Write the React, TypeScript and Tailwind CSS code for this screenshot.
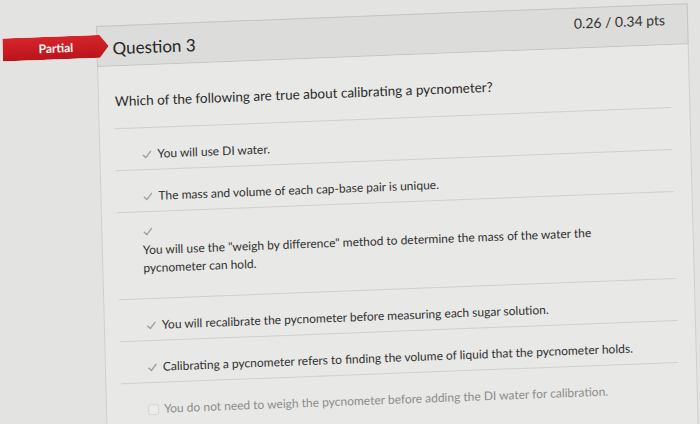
import React from "react"

// Canvas-style quiz result card, tilted to match the photographed screen.

const answers = [
  { text: "You will use DI water.", checked: true },
  { text: "The mass and volume of each cap-base pair is unique.", checked: true },
  {
    text: 'You will use the "weigh by difference" method to determine the mass of the water the pycnometer can hold.',
    checked: true,
    stacked: true,
  },
  { text: "You will recalibrate the pycnometer before measuring each sugar solution.", checked: true },
  { text: "Calibrating a pycnometer refers to finding the volume of liquid that the pycnometer holds.", checked: true },
  { text: "You do not need to weigh the pycnometer before adding the DI water for calibration.", checked: false },
]

function Check({ on }: { on: boolean }) {
  if (!on) {
    return <span className="inline-block w-[11px] h-[11px] rounded-[3px] border border-[#d6d6d4] bg-[#ececea] shrink-0" />
  }
  return (
    <svg width="11" height="11" viewBox="0 0 12 12" className="shrink-0">
      <path d="M2 6.5 L4.8 9.2 L10 2.6" fill="none" stroke="#a3a3a1" strokeWidth="1.6" strokeLinecap="round" strokeLinejoin="round" />
    </svg>
  )
}

export default function App() {
  return (
    <div className="w-[700px] h-[424px] overflow-hidden bg-[#e3e3e1] font-['Lato','Liberation_Sans',sans-serif] text-[#2f2f2f]">
      <div className="relative ml-[96px] mt-[26px] w-[592px] origin-top-left rotate-[-1.5deg] skew-y-[-0.7deg]">
        <div className="absolute left-[-94px] top-[9px] w-[106px] h-[23px] bg-gradient-to-b from-[#d8242b] to-[#b9141b] shadow-[0_1px_2px_rgba(0,0,0,0.35)] [clip-path:polygon(0_0,calc(100%-9px)_0,100%_50%,calc(100%-9px)_100%,0_100%)] flex items-center pl-[36px]">
          <span className="text-white text-[12px] font-bold">Partial</span>
        </div>

        <div className="h-[41px] bg-[#dcdcda] border border-[#c4c4c2] flex items-center justify-between pl-[15px] pr-[22px]">
          <span className="text-[17px] text-[#262626] mt-[4px]">Question 3</span>
          <span className="text-[14px] text-[#333] mb-[10px]">0.26 / 0.34 pts</span>
        </div>

        <div className="h-[460px] bg-[#e8e8e6] border-x border-[#cfcfcd] pl-[15px] pr-[18px]">
          <p className="pt-[26px] pb-[18px] text-[13.5px] leading-[18px] pl-[1px] text-[#2a2a2a]">
            Which of the following are true about calibrating a pycnometer?
          </p>

          {answers.map((a) =>
            a.stacked ? (
              <div key={a.text} className="border-t border-[#cfcfcd] pl-[25px] pt-[14px] pb-[21px]">
                <Check on={a.checked} />
                <p className="mt-[4px] max-w-[460px] text-[12px] leading-[18px] text-[#303030]">{a.text}</p>
              </div>
            ) : (
              <div
                key={a.text}
                className="border-t border-[#cfcfcd] pl-[26px] pt-[17px] pb-[6px] flex items-center gap-[5px] h-[42px]"
              >
                <Check on={a.checked} />
                <span className={`text-[12px] leading-[18px] ${a.checked ? "text-[#303030]" : "text-[#8c8c8a]"}`}>
                  {a.text}
                </span>
              </div>
            )
          )}
        </div>
      </div>
    </div>
  )
}
